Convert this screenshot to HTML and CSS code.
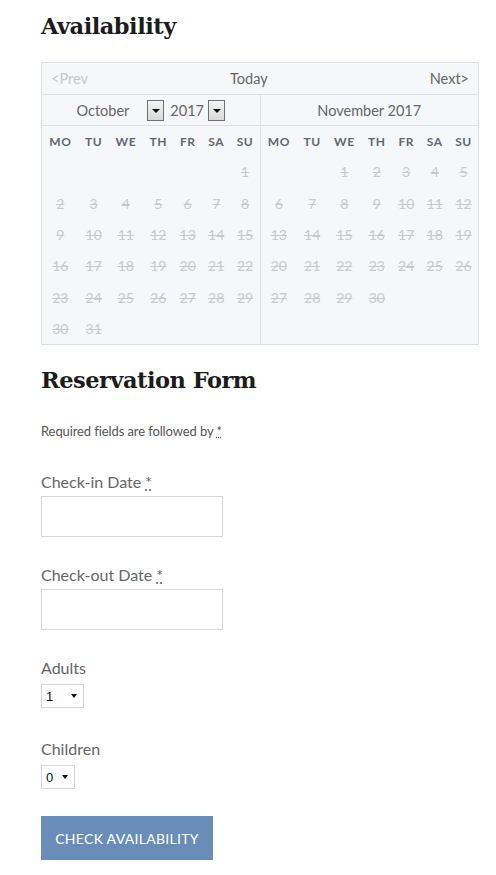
FILE: index.html
```html
<!DOCTYPE html>
<html lang="en">
<head>
  <meta charset="UTF-8">
  <meta name="viewport" content="width=device-width, initial-scale=1.0">
  <title>Availability</title>
  <link rel="stylesheet" href="styles.css">
</head>

<body>
  <div class="page">
    <h2>Availability</h2>

    <!-- Calendar -->
    <div class="calendar">
      <div class="cal-nav">
        <span class="prev">&lt;Prev</span>
        <span class="today">Today</span>
        <span class="next">Next&gt;</span>
      </div>
      <div class="cal-months">
        <div class="month">
          <div class="month-title">
            <span>October</span>
            <span class="drop"></span>
            <span class="year">2017</span>
            <span class="drop"></span>
          </div>
          <table>
            <thead>
              <tr><th>MO</th><th>TU</th><th>WE</th><th>TH</th><th>FR</th><th>SA</th><th>SU</th></tr>
            </thead>
            <tbody>
              <tr><td></td><td></td><td></td><td></td><td></td><td></td><td>1</td></tr>
              <tr><td>2</td><td>3</td><td>4</td><td>5</td><td>6</td><td>7</td><td>8</td></tr>
              <tr><td>9</td><td>10</td><td>11</td><td>12</td><td>13</td><td>14</td><td>15</td></tr>
              <tr><td>16</td><td>17</td><td>18</td><td>19</td><td>20</td><td>21</td><td>22</td></tr>
              <tr><td>23</td><td>24</td><td>25</td><td>26</td><td>27</td><td>28</td><td>29</td></tr>
              <tr><td>30</td><td>31</td><td></td><td></td><td></td><td></td><td></td></tr>
            </tbody>
          </table>
        </div>
        <div class="month">
          <div class="month-title">
            <span>November 2017</span>
          </div>
          <table>
            <thead>
              <tr><th>MO</th><th>TU</th><th>WE</th><th>TH</th><th>FR</th><th>SA</th><th>SU</th></tr>
            </thead>
            <tbody>
              <tr><td></td><td></td><td>1</td><td>2</td><td>3</td><td>4</td><td>5</td></tr>
              <tr><td>6</td><td>7</td><td>8</td><td>9</td><td>10</td><td>11</td><td>12</td></tr>
              <tr><td>13</td><td>14</td><td>15</td><td>16</td><td>17</td><td>18</td><td>19</td></tr>
              <tr><td>20</td><td>21</td><td>22</td><td>23</td><td>24</td><td>25</td><td>26</td></tr>
              <tr><td>27</td><td>28</td><td>29</td><td>30</td><td></td><td></td><td></td></tr>
              <tr><td></td><td></td><td></td><td></td><td></td><td></td><td></td></tr>
            </tbody>
          </table>
        </div>
      </div>
    </div>

    <h2 class="form-title">Reservation Form</h2>
    <p class="required">Required fields are followed by <abbr>*</abbr></p>

    <form>
      <div class="field">
        <label>Check-in Date <abbr>*</abbr></label>
        <input type="text">
      </div>
      <div class="field">
        <label>Check-out Date <abbr>*</abbr></label>
        <input type="text">
      </div>
      <div class="field">
        <label>Adults</label>
        <div class="select wide">1</div>
      </div>
      <div class="field children">
        <label>Children</label>
        <div class="select">0</div>
      </div>
      <button type="button" class="submit">CHECK AVAILABILITY</button>
    </form>
  </div>
</body>

</html>
```

FILE: styles.css
```css
body {
  margin: 0;
  font-family: Lato, "Open Sans", sans-serif;
  color: #666;
  background: #fff;
}

.page {
  padding: 13px 17px 0 41px;
}

h2 {
  margin: 0;
  font-family: "DejaVu Serif", "Liberation Serif", serif;
  font-weight: bold;
  font-size: 22.5px;
  color: #1c1c1c;
  letter-spacing: -0.5px;
}

/* Calendar */
.calendar {
  margin-top: 23px;
  border: 1px solid #dde1e6;
  background: #f5f7fa;
  font-size: 14.5px;
}

.cal-nav {
  display: flex;
  align-items: center;
  height: 31px;
  padding: 0 9px;
  border-bottom: 1px solid #dde1e6;
  color: #666;
}

.cal-nav .prev {
  color: #c4c8cc;
}

.cal-nav .today {
  flex: 1;
  text-align: center;
  padding-right: 20px;
}

.cal-months {
  display: flex;
}

.month {
  flex: 1;
}

.month + .month {
  border-left: 1px solid #dde1e6;
}

.month-title {
  display: flex;
  justify-content: center;
  align-items: center;
  gap: 4px;
  height: 30px;
  border-bottom: 1px solid #dde1e6;
  color: #666;
}

.month-title .drop {
  display: inline-block;
  width: 15px;
  height: 19px;
  border: 1px solid #707070;
  background: linear-gradient(#f4f4f4, #d8d8d8);
  position: relative;
  margin-left: 14px;
}

.month-title .drop + .year {
  margin-left: 2px;
}

.month-title .year + .drop {
  margin-left: 0;
}

.month-title .drop::after {
  content: "";
  position: absolute;
  left: 4px;
  top: 8px;
  border-left: 4px solid transparent;
  border-right: 4px solid transparent;
  border-top: 4px solid #111;
}

table {
  width: 100%;
  border-collapse: collapse;
}

th {
  font-size: 12px;
  font-weight: bold;
  color: #5f6771;
  letter-spacing: 0.5px;
  height: 30px;
  padding: 0 2px;
}

td {
  text-align: center;
  height: 31.4px;
  padding: 0 2px;
  color: #c6cacf;
  text-decoration: line-through;
  font-size: 14px;
}

/* Form */
.form-title {
  margin-top: 22px;
}

.required {
  font-size: 13px;
  color: #555;
  margin: 30px 0 0;
  letter-spacing: -0.1px;
}

abbr {
  text-decoration: underline dotted;
}

.field {
  margin-top: 28px;
}

.field:first-child {
  margin-top: 33px;
}

.field.children {
  margin-top: 31px;
}

.field label {
  display: block;
  font-size: 16px;
  color: #666;
  margin-bottom: 5px;
}

.field input {
  display: block;
  box-sizing: border-box;
  width: 182px;
  height: 41px;
  border: 1px solid #d6d6d6;
  background: #fff;
}

.select {
  display: inline-flex;
  align-items: center;
  box-sizing: border-box;
  height: 24px;
  width: 34px;
  padding-left: 4px;
  border: 1px solid #d6d6d6;
  font-family: Arial, "Liberation Sans", sans-serif;
  font-size: 13px;
  color: #111;
  position: relative;
  margin-top: 2px;
}

.select.wide {
  width: 43px;
}

.select::after {
  content: "";
  position: absolute;
  right: 6px;
  top: 9px;
  border-left: 3.5px solid transparent;
  border-right: 3.5px solid transparent;
  border-top: 4px solid #111;
}

.submit {
  display: block;
  margin-top: 27px;
  width: 172px;
  height: 44px;
  border: none;
  background: #698cb8;
  color: #fff;
  font-family: Lato, sans-serif;
  font-size: 14px;
  letter-spacing: 0.3px;
}
```
